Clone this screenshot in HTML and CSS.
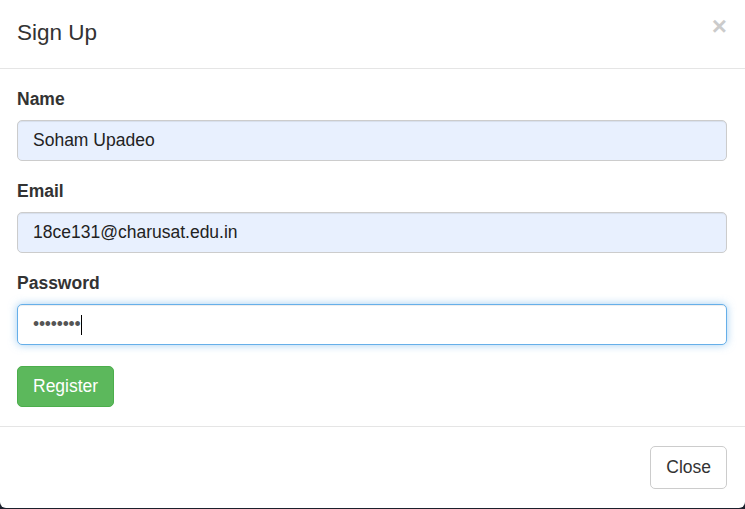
FILE: index.html
```html
<!DOCTYPE html>
<html lang="en">
<head>
<meta charset="utf-8">
<title>Sign Up</title>
<link rel="stylesheet" href="styles.css">
</head>
<body>
<div class="modal">
  <div class="modal-header">
    <h4 class="modal-title">Sign Up</h4>
    <button type="button" class="close" aria-label="Close">&times;</button>
  </div>
  <div class="modal-body">
    <div class="form-group">
      <label class="label" for="name">Name</label>
      <input id="name" class="form-control autofill" type="text" value="Soham Upadeo">
    </div>
    <div class="form-group">
      <label class="label" for="email">Email</label>
      <input id="email" class="form-control autofill" type="text" value="18ce131@charusat.edu.in">
    </div>
    <div class="form-group last">
      <label class="label">Password</label>
      <div class="form-control focused" role="textbox"><span class="dots">&bull;&bull;&bull;&bull;&bull;&bull;&bull;&bull;</span><span class="caret"></span></div>
    </div>
    <button type="button" class="btn btn-success">Register</button>
  </div>
  <div class="modal-footer">
    <button type="button" class="btn btn-default">Close</button>
  </div>
</div>
</body>
</html>
```

FILE: styles.css
```css
* { box-sizing: border-box; }
html, body {
  margin: 0;
  padding: 0;
  height: 509px;
  background: #1c202c;
  overflow: hidden;
}
body {
  font-family: "Liberation Sans", Arial, sans-serif;
  font-size: 17.5px;
  color: #333;
}
.modal {
  width: 745px;
  height: 508px;
  background: #fff;
  border-radius: 0 0 6px 6px;
  display: flex;
  flex-direction: column;
}
.modal-header {
  display: flex;
  justify-content: space-between;
  align-items: flex-start;
  padding: 17px 18px 19px 17px;
  border-bottom: 1px solid #e5e5e5;
  height: 69px;
}
.modal-title {
  margin: 0;
  font-size: 22.5px;
  font-weight: 400;
  line-height: 32px;
  color: #333;
}
.close {
  margin-top: -4px;
  padding: 0;
  border: 0;
  background: transparent;
  font-family: "Liberation Sans", Arial, sans-serif;
  font-size: 26px;
  font-weight: 700;
  line-height: 1;
  color: #000;
  opacity: .2;
  text-shadow: 0 1px 0 #fff;
  cursor: pointer;
}
.modal-body {
  padding: 18px 18px 19px 17px;
  border-bottom: 1px solid #e5e5e5;
}
.form-group {
  margin-bottom: 18px;
}
.form-group.last {
  margin-bottom: 21px;
}
.label {
  display: block;
  font-weight: 700;
  line-height: 25px;
  margin-bottom: 8px;
}
.form-control {
  display: flex;
  align-items: center;
  width: 100%;
  height: 41px;
  padding: 0 15px;
  font-family: "Liberation Sans", Arial, sans-serif;
  font-size: 17.5px;
  color: #222;
  background: #fff;
  border: 1px solid #ccc;
  border-radius: 5px;
  box-shadow: inset 0 1px 1px rgba(0,0,0,.075);
  outline: none;
}
.autofill {
  background: #e8f0fe;
}
.focused {
  border-color: #66afe9;
  box-shadow: inset 0 1px 1px rgba(0,0,0,.075), 0 0 8px rgba(102,175,233,.6);
}
.dots {
  color: #555;
  letter-spacing: -0.2px;
}
.caret {
  display: inline-block;
  width: 1px;
  height: 20px;
  background: #000;
  margin-left: 1px;
}
.btn {
  display: inline-block;
  height: 41px;
  padding: 0 15px;
  font-family: "Liberation Sans", Arial, sans-serif;
  font-size: 17.5px;
  line-height: 39px;
  border: 1px solid transparent;
  border-radius: 5px;
  cursor: pointer;
}
.btn-success {
  color: #fff;
  background: #5cb85c;
  border-color: #4cae4c;
}
.modal-footer {
  display: flex;
  justify-content: flex-end;
  padding: 19px 18px;
}
.btn-default {
  height: 43px;
  line-height: 41px;
  color: #333;
  background: #fff;
  border-color: #ccc;
}
```
